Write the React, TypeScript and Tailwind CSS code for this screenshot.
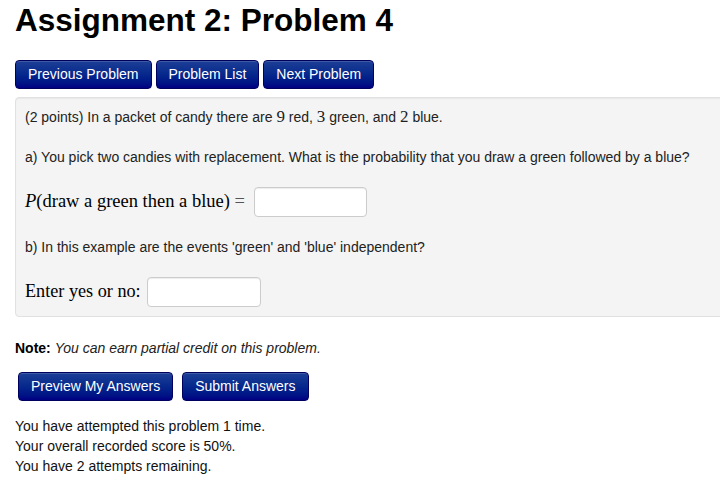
import React from "react";

const btn =
  "h-[29px] px-[12px] rounded-[4px] text-white text-[14px] bg-gradient-to-b from-[#1d3f96] to-[#000082] border border-[#00005e] shadow-[inset_0_1px_0_rgba(255,255,255,0.15)] flex items-center";

const M = ({ children }: { children: React.ReactNode }) => (
  <span className="font-['Liberation_Serif',serif] text-[17px]">{children}</span>
);

export default function App() {
  return (
    <div className="w-[720px] h-[495px] overflow-hidden bg-white font-['Liberation_Sans',Arial,sans-serif] text-[#111]">
      <div className="pl-[15px]">
        <h1 className="font-bold text-[31.5px] leading-[38px] pt-[1px] text-black">Assignment 2: Problem 4</h1>
        <div className="flex gap-[4px] mt-[21px]">
          <button className={btn}>Previous Problem</button>
          <button className={btn}>Problem List</button>
          <button className={btn}>Next Problem</button>
        </div>
        <div className="mt-[8px] w-[720px] h-[220px] bg-[#f4f4f4] border border-[#e1e1e1] rounded-[4px] shadow-[inset_0_1px_1px_rgba(0,0,0,0.05)] pl-[9px] pt-[9px] text-[14px] text-[#222]">
          <p className="leading-[20px]">
            (2 points) In a packet of candy there are <M>9</M> red, <M>3</M> green, and <M>2</M> blue.
          </p>
          <p className="leading-[20px] mt-[20px]">
            a) You pick two candies with replacement. What is the probability that you draw a green followed by a blue?
          </p>
          <div className="flex items-center mt-[20px] h-[30px]">
            <span className="font-['Liberation_Serif',serif] text-[18.5px] text-black">
              <i>P</i>(draw a green then a blue) <span className="text-[#555]">=</span>
            </span>
            <input className="ml-[9px] w-[113px] h-[30px] bg-white border border-[#ccc] rounded-[4px] shadow-[inset_0_1px_1px_rgba(0,0,0,0.075)]" />
          </div>
          <p className="leading-[20px] mt-[20px]">
            b) In this example are the events 'green' and 'blue' independent?
          </p>
          <div className="flex items-center mt-[20px] h-[30px]">
            <span className="font-['Liberation_Serif',serif] text-[18.2px] text-black">Enter yes or no:</span>
            <input className="ml-[6px] w-[114px] h-[30px] bg-white border border-[#ccc] rounded-[4px] shadow-[inset_0_1px_1px_rgba(0,0,0,0.075)]" />
          </div>
        </div>
        <p className="mt-[21px] text-[14px] leading-[20px] text-[#222]">
          <b className="text-black">Note:</b> <i>You can earn partial credit on this problem.</i>
        </p>
        <div className="flex gap-[9px] mt-[14px] ml-[3px]">
          <button className={btn + " text-[14.5px]"}>Preview My Answers</button>
          <button className={btn + " text-[14.5px]"}>Submit Answers</button>
        </div>
        <div className="mt-[15px] text-[14px] leading-[20px] text-[#111]">
          <div>You have attempted this problem 1 time.</div>
          <div>Your overall recorded score is 50%.</div>
          <div>You have 2 attempts remaining.</div>
        </div>
      </div>
    </div>
  );
}
